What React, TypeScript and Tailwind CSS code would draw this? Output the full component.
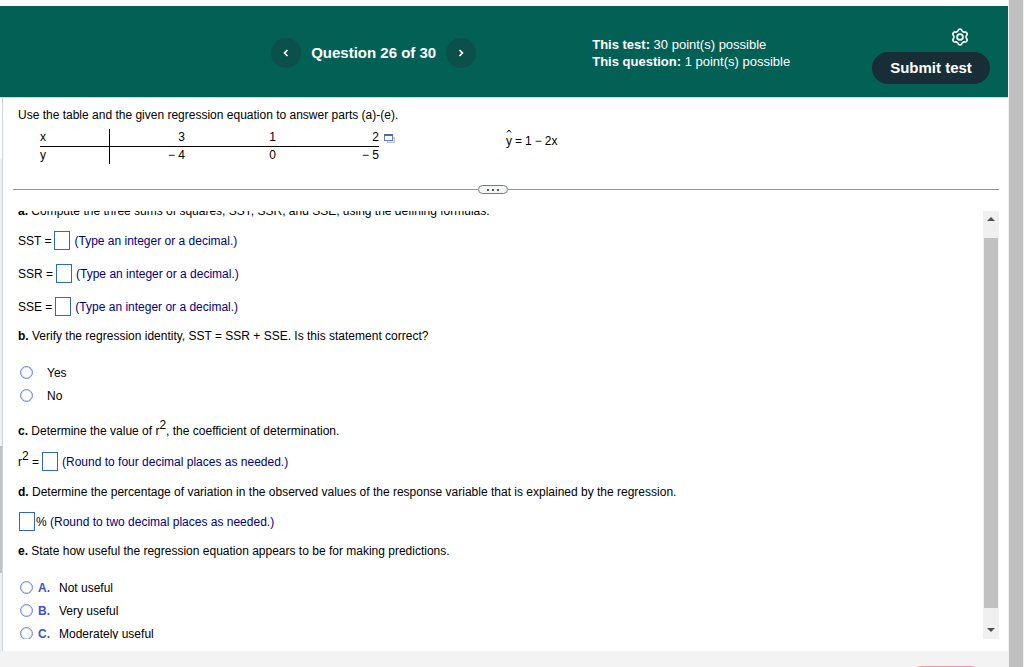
import type { ReactNode } from "react";

const dataTable = [
  { label: "x", values: ["3", "1", "2"] },
  { label: "y", values: ["− 4", "0", "− 5"] },
];

const sums = ["SST", "SSR", "SSE"];

const usefulness = [
  { letter: "A.", text: "Not useful" },
  { letter: "B.", text: "Very useful" },
  { letter: "C.", text: "Moderately useful" },
];

// Six rounded teeth around the origin, one of them pointing up
const gearOutline = Array.from({ length: 72 }, (_, i) => {
  const angle = (i * 5 * Math.PI) / 180;
  const wave = Math.cos(6 * angle);
  const radius = 7 + 0.9 * Math.tanh(2 * wave);
  return `${(radius * Math.sin(angle)).toFixed(2)},${(-radius * Math.cos(angle)).toFixed(2)}`;
}).join(" ");

function GearIcon() {
  return (
    <svg viewBox="-9 -9 18 18" className="size-[18px]" fill="none" stroke="currentColor">
      <polygon points={gearOutline} strokeWidth="1.6" strokeLinejoin="round" />
      <circle r="2.9" strokeWidth="1.7" />
    </svg>
  );
}

function NavButton({ label, d }: { label: string; d: string }) {
  return (
    <button
      aria-label={label}
      className="flex size-[30px] items-center justify-center rounded-full bg-[#0b504b] text-white"
    >
      <svg viewBox="0 0 8 8" className="size-2" fill="none" stroke="currentColor" strokeWidth="1.7">
        <path d={d} />
      </svg>
    </button>
  );
}

function AnswerBox({ label }: { label: string }) {
  return (
    <input
      type="text"
      aria-label={label}
      className="h-[19px] w-4 shrink-0 border border-[#2f66cf] bg-white outline-none"
    />
  );
}

function Hint({ children }: { children: ReactNode }) {
  return <span className="text-[#00007f]">{children}</span>;
}

function Squared() {
  return <sup className="-top-[6px] text-[12px]">2</sup>;
}

function Radio({ name }: { name: string }) {
  return (
    <input
      type="radio"
      name={name}
      className="size-[13px] appearance-none rounded-full border border-[#6f86dd] bg-white ring-1 ring-[#6f86dd]/30 ring-inset checked:bg-[#6f86dd]"
    />
  );
}

function Header() {
  return (
    <header className="flex h-[91px] shrink-0 items-center bg-[#036055] pt-[2px] pr-[18px] pl-[27%] text-white">
      <nav className="-ml-px flex items-center gap-[10px]">
        <NavButton label="Previous question" d="M5.5 1 2.5 4l3 3" />
        <h1 className="text-[15px] font-bold whitespace-nowrap">Question 26 of 30</h1>
        <NavButton label="Next question" d="m2.5 1 3 3-3 3" />
      </nav>

      <div className="ml-[116px] text-[13px] leading-[17px] whitespace-nowrap">
        <p>
          <b>This test:</b> 30 point(s) possible
        </p>
        <p>
          <b>This question:</b> 1 point(s) possible
        </p>
      </div>

      <div className="ml-auto flex flex-col items-end gap-[6px] pt-[6px]">
        <button aria-label="Settings" className="mr-[21px]">
          <GearIcon />
        </button>
        <button className="h-8 w-[118px] rounded-full bg-[#172e36] text-[15px] font-bold whitespace-nowrap">
          Submit test
        </button>
      </div>
    </header>
  );
}

function Stem() {
  return (
    <section className="h-[87px] pt-[9px] pl-[15px]">
      <p>Use the table and the given regression equation to answer parts (a)-(e).</p>
      <div className="mt-[6px] flex items-start pl-[22px]">
        <table className="w-[339px] table-fixed border-collapse leading-[17px]">
          <colgroup>
            <col className="w-[69px]" />
            <col className="w-[76px]" />
            <col className="w-[91px]" />
            <col className="w-[103px]" />
          </colgroup>
          <tbody>
            {dataTable.map((row) => (
              <tr key={row.label} className="h-[17px] border-black not-last:border-b">
                <th className="border-r border-black p-0 text-left font-normal">{row.label}</th>
                {row.values.map((value) => (
                  <td key={value} className="p-0 text-right">
                    {value}
                  </td>
                ))}
              </tr>
            ))}
          </tbody>
        </table>

        <button aria-label="Open data table" className="mt-[5px] ml-[5px]">
          <svg viewBox="0 0 12 10" className="h-[10px] w-3">
            <rect x="3.5" y="3.5" width="7" height="5" fill="#dfe3f5" stroke="#b9c1e6" />
            <rect x="0.5" y="0.5" width="8" height="6" fill="#fff" stroke="#6a7bc6" />
            <path d="M0 1h9" stroke="#5468b8" strokeWidth="2" />
          </svg>
        </button>

        <p className="mt-1 ml-[110px] flex gap-[3px]">
          <span className="relative">
            y
            <svg
              viewBox="0 0 6 4"
              className="absolute -top-1 left-0 h-1 w-[6px]"
              fill="none"
              stroke="currentColor"
            >
              <path d="m1 3.5 2-2.5 2 2.5" />
            </svg>
          </span>
          <span>=</span>
          <span>1</span>
          <span>−</span>
          <span>2x</span>
        </p>
      </div>
    </section>
  );
}

function Splitter() {
  return (
    <div className="mr-[9px] ml-[10px] flex h-[9px] items-center">
      <div className="h-px flex-1 bg-[#8c97a3]" />
      <button
        aria-label="Resize question panel"
        className="flex h-[9px] w-[30px] items-center justify-center gap-[3px] rounded-full border border-[#6c7c8a] bg-[#f3f5f7]"
      >
        <span className="size-[2px] bg-[#4b5865]" />
        <span className="size-[2px] bg-[#4b5865]" />
        <span className="size-[2px] bg-[#4b5865]" />
      </button>
      <div className="h-px flex-1 bg-[#8c97a3]" />
      <div className="h-px w-[27px] bg-[#8c97a3]" />
    </div>
  );
}

function Scrollbar() {
  return (
    <div className="flex w-4 shrink-0 flex-col items-center bg-[#f0f0f0] text-[#505050]">
      <svg viewBox="0 0 8 4" className="my-[6px] h-1 w-2 shrink-0" fill="currentColor">
        <path d="M0 4 4 0l4 4z" />
      </svg>
      <div className="mt-[11px] mb-5 w-[14px] flex-1 bg-[#c1c1c1]" />
      <svg viewBox="0 0 8 4" className="mb-[7px] h-1 w-2 shrink-0" fill="currentColor">
        <path d="M0 0h8L4 4z" />
      </svg>
    </div>
  );
}

function Parts() {
  return (
    <div className="-mt-2 min-w-0 flex-1 whitespace-nowrap">
      <p className="mb-[5px]">
        <b>a.</b> Compute the three sums of squares, SST, SSR, and SSE, using the defining formulas.
      </p>
      {sums.map((name) => (
        <div key={name} className="flex h-[33px] items-center">
          <span className="mr-[3px]">{name} =</span>
          <AnswerBox label={name} />
          <span className="ml-1">
            <Hint>(Type an integer or a decimal.)</Hint>
          </span>
        </div>
      ))}

      <p className="mt-[5px]">
        <b>b.</b> Verify the regression identity, SST = SSR + SSE. Is this statement correct?
      </p>
      <div className="mt-[17px] pl-[2px]">
        {["Yes", "No"].map((option) => (
          <label key={option} className="flex h-[23px] items-center gap-[14px]">
            <Radio name="identity" />
            {option}
          </label>
        ))}
      </div>

      <p className="mt-4">
        <b>c.</b> Determine the value of r<Squared />, the coefficient of determination.
      </p>
      <div className="mt-[13px] flex h-[19px] items-center">
        <span className="mr-[3px]">
          r<Squared /> =
        </span>
        <AnswerBox label="r squared" />
        <span className="ml-1">
          <Hint>(Round to four decimal places as needed.)</Hint>
        </span>
      </div>

      <p className="mt-[13px]">
        <b>d.</b> Determine the percentage of variation in the observed values of the response
        variable that is explained by the regression.
      </p>
      <div className="mt-3 flex h-[19px] items-center gap-px pl-px">
        <AnswerBox label="Percentage of variation" />
        <span>
          % <Hint>(Round to two decimal places as needed.)</Hint>
        </span>
      </div>

      <p className="mt-3">
        <b>e.</b> State how useful the regression equation appears to be for making predictions.
      </p>
      <div className="mt-[17px] pl-[2px]">
        {usefulness.map((option) => (
          <label key={option.letter} className="flex h-[23px] items-center">
            <Radio name="usefulness" />
            <b className="ml-[5px] w-[21px] text-[#3a55cc]">{option.letter}</b>
            {option.text}
          </label>
        ))}
      </div>
    </div>
  );
}

export default function App() {
  return (
    <div className="flex h-screen overflow-hidden bg-white font-['Liberation_Sans',Arial,sans-serif] text-[12px] leading-4 text-black">
      <div className="flex min-w-0 flex-1 flex-col pt-[6px]">
        <Header />

        <div className="flex min-h-0 flex-1 border-t border-[#ccd5da]">
          {/* Edge of the collapsed question list */}
          <div className="flex w-[2px] shrink-0 flex-col bg-[#f0f0f0]">
            <div className="h-[60px] bg-white" />
            <div className="mt-auto mb-[78px] h-[127px] bg-[#c1c1c1]" />
          </div>

          <main className="flex min-w-0 flex-1 flex-col border-l border-[#ccd5da]">
            <Stem />
            <Splitter />
            <div className="mt-[17px] mr-[9px] mb-3 flex min-h-0 flex-1 overflow-hidden pl-[15px]">
              <Parts />
              <Scrollbar />
            </div>
          </main>
        </div>

        <footer className="flex h-4 shrink-0 justify-end overflow-hidden bg-[#f3f3f3] pt-[15px] pr-[22px]">
          <div className="h-8 w-20 shrink-0 rounded-full bg-linear-to-r from-[#f5a08c] to-[#f08cc8]" />
        </footer>
      </div>

      <div className="w-4 shrink-0 border-x border-[#f0f0f0] bg-[#c1c1c1]" />
    </div>
  );
}
